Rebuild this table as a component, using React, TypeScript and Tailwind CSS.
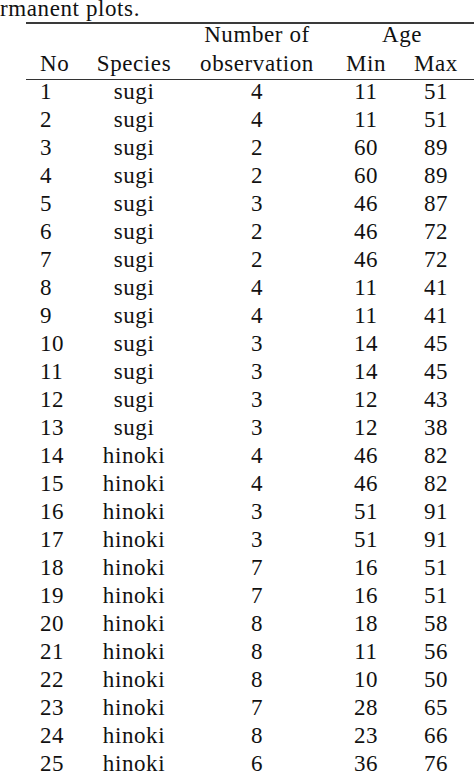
import React from "react";

const rows: [string, string, string, string, string][] = [
  ["1", "sugi", "4", "11", "51"],
  ["2", "sugi", "4", "11", "51"],
  ["3", "sugi", "2", "60", "89"],
  ["4", "sugi", "2", "60", "89"],
  ["5", "sugi", "3", "46", "87"],
  ["6", "sugi", "2", "46", "72"],
  ["7", "sugi", "2", "46", "72"],
  ["8", "sugi", "4", "11", "41"],
  ["9", "sugi", "4", "11", "41"],
  ["10", "sugi", "3", "14", "45"],
  ["11", "sugi", "3", "14", "45"],
  ["12", "sugi", "3", "12", "43"],
  ["13", "sugi", "3", "12", "38"],
  ["14", "hinoki", "4", "46", "82"],
  ["15", "hinoki", "4", "46", "82"],
  ["16", "hinoki", "3", "51", "91"],
  ["17", "hinoki", "3", "51", "91"],
  ["18", "hinoki", "7", "16", "51"],
  ["19", "hinoki", "7", "16", "51"],
  ["20", "hinoki", "8", "18", "58"],
  ["21", "hinoki", "8", "11", "56"],
  ["22", "hinoki", "8", "10", "50"],
  ["23", "hinoki", "7", "28", "65"],
  ["24", "hinoki", "8", "23", "66"],
  ["25", "hinoki", "6", "36", "76"],
];

const grid = "grid grid-cols-[59px_98px_148px_70px_70px]";

export default function App() {
  return (
    <div className="w-[474px] h-[783px] overflow-hidden bg-white text-[#111] font-['Liberation_Serif',serif] text-[23px] tracking-[0.6px]">
      <div className="h-[17px] leading-[17px] whitespace-nowrap">rmanent plots.</div>
      <div className="ml-[26px] mt-[5px]">
        <div className="h-[2px] bg-[#3a3a3a]" />
        <div className={`${grid} h-[29px] leading-[22px]`}>
          <div />
          <div />
          <div className="text-center whitespace-nowrap">Number of</div>
          <div className="col-span-2 text-center pl-[2px]">Age</div>
        </div>
        <div className={`${grid} h-[26px] leading-[22px]`}>
          <div className="pl-[14px]">No</div>
          <div className="text-center">Species</div>
          <div className="text-center">observation</div>
          <div className="text-center">Min</div>
          <div className="text-center">Max</div>
        </div>
        <div className="h-px bg-[#333]" />
        <div className="mt-[1px]">
          {rows.map((r) => (
            <div key={r[0]} className={`${grid} h-[28px] leading-[22px]`}>
              <div className="pl-[14px]">{r[0]}</div>
              <div className="text-center">{r[1]}</div>
              <div className="text-center">{r[2]}</div>
              <div className="text-center">{r[3]}</div>
              <div className="text-center">{r[4]}</div>
            </div>
          ))}
        </div>
      </div>
    </div>
  );
}
